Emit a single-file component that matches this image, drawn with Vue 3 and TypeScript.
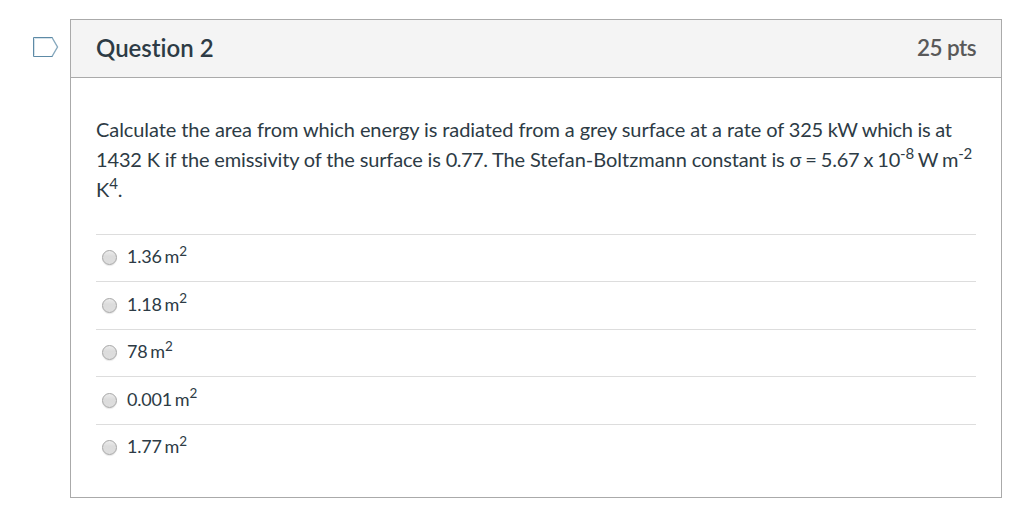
<script setup lang="ts">
import { ref } from 'vue'

interface Answer {
  id: number
  value: string
}

const answers: Answer[] = [
  { id: 1, value: '1.36' },
  { id: 2, value: '1.18' },
  { id: 3, value: '78' },
  { id: 4, value: '0.001' },
  { id: 5, value: '1.77' },
]
const selected = ref<number | null>(null)
</script>

<template>
  <main class="page">
    <button class="flag" aria-label="Flag question">
      <svg width="26" height="21" viewBox="0 0 26 21" fill="none">
        <path d="M19 .5L24.5 10L19 19.5" stroke="#87a9be" stroke-width="1.4" />
        <path d="M19.5 .5H.5V19.5H19.5" stroke="#5d8aa6" />
        <path d="M1.5 18.5V1.5H18.5" stroke="#d5e2ea" />
      </svg>
    </button>
    <section class="question">
      <header class="header">
        <h1 class="title">Question 2</h1>
        <span class="points">25 pts</span>
      </header>
      <div class="body">
        <p class="prompt">
          <span class="line">Calculate the area from which energy is radiated from a grey surface at a rate of <span class="tight">325 kW which is at</span></span>
          <span class="line second">1432 K if the emissivity of the surface is <span class="number">0.77. </span>The <span class="name">Stefan-Boltzmann</span> constant is <span class="formula">σ = 5.67 x 10<sup>-8</sup> W m<sup>-2</sup></span></span>
          <span class="line">K<sup>4</sup>.</span>
        </p>
        <div class="answers">
          <label v-for="answer in answers" :key="answer.id" class="answer">
            <input v-model="selected" class="radio" type="radio" name="answer" :value="answer.id" />
            <span class="text">{{ answer.value }} m<sup>2</sup></span>
          </label>
        </div>
      </div>
    </section>
  </main>
</template>

<style>
body {
  margin: 0;
  background: #fff;
}
</style>

<style scoped>
.page {
  box-sizing: border-box;
  height: 516px;
  padding: 19px 20px 18px 33px;
  display: flex;
  align-items: flex-start;
  font-family: Lato, "Liberation Sans", sans-serif;
  font-variant-ligatures: none;
  color: #2d3b45;
}
.flag {
  width: 37px;
  flex: none;
  margin: 18px 0 0;
  padding: 0;
  border: 0;
  background: none;
  display: flex;
}
.question {
  box-sizing: border-box;
  flex: 1;
  min-width: 0;
  height: 479px;
  border: 1px solid #aaa;
}
.header {
  box-sizing: border-box;
  height: 58px;
  padding: 0 25px 2px;
  display: flex;
  align-items: center;
  justify-content: space-between;
  background: #f4f4f4;
  border-bottom: 1px solid #aaa;
}
.title,
.points {
  margin: 0;
  font-size: 24px;
  line-height: 30px;
  font-weight: 600;
}
.points {
  font-size: 22.5px;
  letter-spacing: -0.55px;
  color: #595959;
}
.body {
  padding: 36px 25px 0;
}
.prompt {
  margin: 0;
  font-size: 20px;
  line-height: 30px;
}
.line {
  display: block;
  white-space: nowrap;
  letter-spacing: -0.083px;
}
.tight {
  letter-spacing: -0.28px;
}
.second {
  letter-spacing: -0.15px;
}
.number {
  letter-spacing: -0.5px;
}
.name {
  letter-spacing: -0.02px;
}
.formula {
  letter-spacing: -0.2px;
  word-spacing: -0.9px;
}
sup {
  position: relative;
  top: -0.56em;
  font-size: 75%;
  line-height: 0;
  vertical-align: baseline;
}
.answers {
  margin-top: 29.9px;
}
.answer {
  box-sizing: border-box;
  height: 47.5px;
  border-top: 1px solid #ddd;
  padding: 0 0 2px 6px;
  display: flex;
  align-items: center;
}
.radio {
  appearance: none;
  box-sizing: border-box;
  flex: none;
  width: 15px;
  height: 15px;
  margin: 1px 10px 0 0;
  border: 1px solid #a6a6a6;
  border-radius: 50%;
  background: linear-gradient(#ececec, #dcdcdc 40%, #dedede);
  box-shadow: 0 1px 1px rgba(0, 0, 0, 0.1);
}
.radio:checked {
  background: radial-gradient(circle, #555 0 3px, #dedede 4px);
}
.text {
  padding-bottom: 2px;
  font-size: 18px;
  line-height: 24px;
  letter-spacing: -0.2px;
  word-spacing: -1.6px;
}
</style>
